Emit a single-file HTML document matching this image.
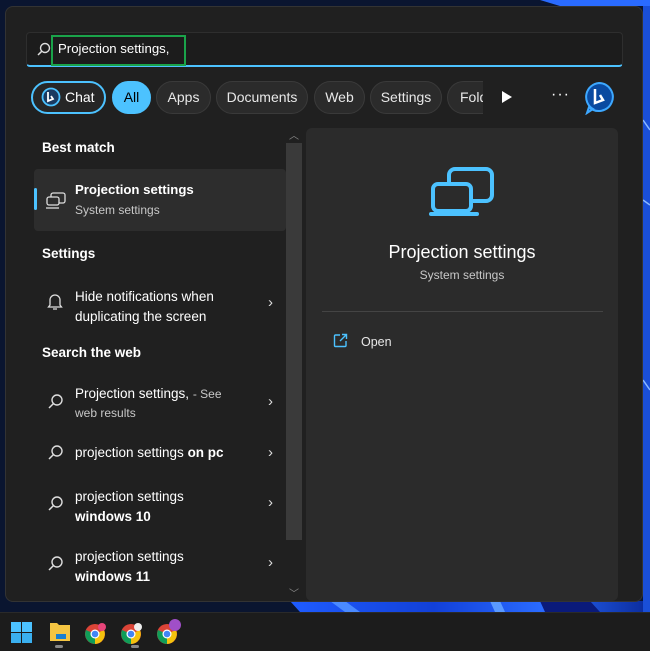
<!DOCTYPE html>
<html><head><meta charset="utf-8"><style>
*{margin:0;padding:0;box-sizing:border-box}
body{width:650px;height:651px;overflow:hidden;background:#0a1530;font-family:"Liberation Sans",sans-serif;color:#fff;position:relative}
.a{position:absolute}
.panel{left:5px;top:6px;width:638px;height:596px;background:#202020;border:1px solid #333;border-radius:8px}
.pill{position:absolute;top:81px;height:33px;border-radius:17px;background:#2b2b2b;border:1px solid #3a3a3a;font-size:14px;line-height:31px;text-align:center;color:#e8e8e8}
.t{position:absolute;font-size:13.5px;color:#fff}
.b{font-weight:bold}
.chev{position:absolute;left:268px;font-size:15px;color:#ddd}
.h{position:absolute;left:42px;font-size:13.5px;font-weight:bold;color:#fff}
.sub{color:#c8c8c8;font-size:12px}
</style></head><body>
<svg class="a" style="left:0;top:0" width="650" height="651">
<defs><linearGradient id="g" x1="0" x2="1"><stop offset="0" stop-color="#1f5cff"/><stop offset=".4" stop-color="#1240d8"/><stop offset=".7" stop-color="#2a6bff"/><stop offset="1" stop-color="#0a2a9a"/></linearGradient></defs>
<path d="M290 601 L650 601 L650 612 L300 612Z" fill="url(#g)"/>
<path d="M330 601 L345 612 L360 612 L345 601Z" fill="#4a8aff"/>
<path d="M490 601 L495 612 L505 612 L500 601Z" fill="#5a9aff"/>
<path d="M540 601 L545 612 L600 612 L590 601Z" fill="#0a1a7a"/>
<rect x="643" y="0" width="7" height="612" fill="#1a4fd8"/>
<path d="M540 0 L650 0 L650 6 L560 6Z" fill="#2a6bff"/>
<path d="M643 120 L650 130 M643 200 L650 205 M643 380 L650 390" stroke="#8ab8ff" stroke-width="1.5"/>
</svg>
<div class="a panel"></div>
<div class="a" style="left:26px;top:32px;width:597px;height:35px;background:#1c1c1c;border:1px solid #2e2e2e;border-radius:4px;border-bottom:2px solid #4cc2ff"></div>
<svg class="a" style="left:37px;top:42px" width="14" height="14"><circle cx="8" cy="6" r="4.5" stroke="#ddd" stroke-width="1.4" fill="none"/><path d="M4.7 9.3 L1 13" stroke="#ddd" stroke-width="1.5"/></svg>
<div class="a" style="left:51px;top:35px;width:135px;height:31px;border:2px solid #1aa34a"></div>
<div class="t" style="left:58px;top:41px;font-size:13.2px">Projection settings,</div>
<div class="pill" style="left:31px;width:75px;border:2px solid #4cc2ff;background:#262626"></div>
<svg class="a" style="left:40px;top:87px" width="22" height="22"><circle cx="11" cy="10" r="8.5" stroke="#4cc2ff" stroke-width="1.8" fill="#1a3a60"/><path d="M8 5 V14 L13 12 L11 9" stroke="#fff" stroke-width="1.8" fill="none"/></svg>
<div class="t" style="left:65px;top:89px;font-size:14px">Chat</div>
<div class="pill" style="left:112px;width:39px;background:#4cc2ff;border-color:#4cc2ff;color:#000">All</div>
<div class="pill" style="left:156px;width:55px">Apps</div>
<div class="pill" style="left:216px;width:92px">Documents</div>
<div class="pill" style="left:314px;width:51px">Web</div>
<div class="pill" style="left:370px;width:72px">Settings</div>
<div class="pill" style="left:447px;width:50px;text-align:left;padding-left:12px;overflow:hidden;border-right:none;border-radius:17px 0 0 17px">Folders</div>
<div class="a" style="left:483px;top:80px;width:40px;height:36px;background:#202020"></div>
<svg class="a" style="left:501px;top:90px" width="12" height="14"><path d="M1 1 L11 7 L1 13Z" fill="#fff"/></svg>
<div class="t" style="left:551px;top:86px;font-size:16px;letter-spacing:1px">···</div>
<svg class="a" style="left:583px;top:81px" width="32" height="34"><path d="M16 2 A14 14 0 1 1 6 26 L4 32 L10 28 A14 14 0 0 1 16 2Z" fill="#0a4aa0" stroke="#3da8ff" stroke-width="2"/><path d="M12 8 V22 L20 19 L17 14" stroke="#fff" stroke-width="2.5" fill="none"/></svg>

<div class="a" style="left:286px;top:143px;width:16px;height:397px;background:#3a3a3a"></div>
<div class="t" style="left:289px;top:127px;font-size:10px;color:#888">︿</div>
<div class="t" style="left:289px;top:585px;font-size:10px;color:#888">﹀</div>

<div class="h" style="top:140px">Best match</div>
<div class="a" style="left:34px;top:169px;width:252px;height:62px;background:#2d2d2d;border-radius:4px"></div>
<div class="a" style="left:34px;top:188px;width:3px;height:22px;background:#4cc2ff;border-radius:2px"></div>
<svg class="a" style="left:45px;top:192px" width="22" height="18"><rect x="6" y="1" width="14" height="10" rx="2" stroke="#ddd" stroke-width="1.3" fill="#2d2d2d"/><rect x="2" y="5" width="12" height="8" rx="2" stroke="#ddd" stroke-width="1.3" fill="#2d2d2d"/><path d="M1 16 H14" stroke="#ddd" stroke-width="1.3"/></svg>
<div class="t b" style="left:75px;top:182px;font-size:13.2px">Projection settings</div>
<div class="t sub" style="left:75px;top:203px">System settings</div>
<div class="h" style="top:246px">Settings</div>
<svg class="a" style="left:46px;top:292px" width="18" height="20"><path d="M4 13 V8 A5 5 0 0 1 14 8 V13 L15.5 15 H2.5Z M7 17 H11" stroke="#ddd" stroke-width="1.3" fill="none"/></svg>
<div class="t" style="left:75px;top:287px;line-height:19.5px">Hide notifications when<br>duplicating the screen</div>
<div class="chev" style="top:294px">›</div>
<div class="h" style="top:345px">Search the web</div>
<svg class="a" style="left:47px;top:393px" width="18" height="18"><circle cx="10" cy="7" r="5" stroke="#ddd" stroke-width="1.4" fill="none"/><path d="M6.5 10.5 L2 15" stroke="#ddd" stroke-width="1.5"/></svg>
<div class="t" style="left:75px;top:386px">Projection settings, <span class="sub">- See</span><br><span class="sub" style="line-height:24px">web results</span></div>
<div class="chev" style="top:393px">›</div>
<svg class="a" style="left:47px;top:444px" width="18" height="18"><circle cx="10" cy="7" r="5" stroke="#ddd" stroke-width="1.4" fill="none"/><path d="M6.5 10.5 L2 15" stroke="#ddd" stroke-width="1.5"/></svg>
<div class="t" style="left:75px;top:445px">projection settings <b>on pc</b></div>
<div class="chev" style="top:444px">›</div>
<svg class="a" style="left:47px;top:495px" width="18" height="18"><circle cx="10" cy="7" r="5" stroke="#ddd" stroke-width="1.4" fill="none"/><path d="M6.5 10.5 L2 15" stroke="#ddd" stroke-width="1.5"/></svg>
<div class="t" style="left:75px;top:487px;line-height:20px">projection settings<br><b>windows 10</b></div>
<div class="chev" style="top:494px">›</div>
<svg class="a" style="left:47px;top:555px" width="18" height="18"><circle cx="10" cy="7" r="5" stroke="#ddd" stroke-width="1.4" fill="none"/><path d="M6.5 10.5 L2 15" stroke="#ddd" stroke-width="1.5"/></svg>
<div class="t" style="left:75px;top:547px;line-height:20px">projection settings<br><b>windows 11</b></div>
<div class="chev" style="top:554px">›</div>

<div class="a" style="left:306px;top:128px;width:312px;height:473px;background:#2b2b2b;border-radius:6px"></div>
<svg class="a" style="left:428px;top:165px" width="70" height="52"><rect x="21" y="4" width="43" height="32" rx="6" stroke="#4cc2ff" stroke-width="4" fill="#2b2b2b"/><rect x="5" y="19" width="38" height="27" rx="5" stroke="#4cc2ff" stroke-width="4" fill="#2b2b2b"/><path d="M3 49 H49" stroke="#4cc2ff" stroke-width="4" stroke-linecap="round"/></svg>
<div class="t" style="left:306px;width:312px;text-align:center;top:242px;font-size:18px">Projection settings</div>
<div class="t sub" style="left:306px;width:312px;text-align:center;top:268px">System settings</div>
<div class="a" style="left:322px;top:311px;width:281px;height:1px;background:#444"></div>
<svg class="a" style="left:333px;top:333px" width="15" height="15"><path d="M7 2 H2.5 A1 1 0 0 0 1.5 3 V12.5 A1 1 0 0 0 2.5 13.5 H12 A1 1 0 0 0 13 12.5 V8 M7 8 L13.5 1.5 M9 1.5 H13.5 V6" stroke="#4cc2ff" stroke-width="1.4" fill="none"/></svg>
<div class="t" style="left:361px;top:335px;font-size:12.5px;color:#e8e8e8">Open</div>

<div class="a" style="left:0;top:612px;width:650px;height:39px;background:#1c1c1c;border-top:1px solid #2a2a2a"></div>
<svg class="a" style="left:11px;top:622px" width="22" height="22"><rect x="0" y="0" width="10" height="10" fill="#4cc2ff"/><rect x="11" y="0" width="10" height="10" fill="#4cc2ff"/><rect x="0" y="11" width="10" height="10" fill="#3ab0f0"/><rect x="11" y="11" width="10" height="10" fill="#3ab0f0"/></svg>
<svg class="a" style="left:48px;top:621px" width="24" height="22"><path d="M2 2 H9 L11 4 H22 V20 H2Z" fill="#f5c542"/><rect x="8" y="13" width="10" height="5" fill="#1a7fd0"/></svg>
<div class="a" style="left:55px;top:645px;width:8px;height:3px;background:#888;border-radius:2px"></div>
<svg class="a" style="left:84px;top:621px" width="26" height="24"><circle cx="11" cy="13" r="10" fill="#db4437"/><path d="M11 13 L20 9 A10 10 0 0 1 11 23Z" fill="#f4c20d"/><path d="M11 13 L11 23 A10 10 0 0 1 2 9Z" fill="#0f9d58"/><circle cx="11" cy="13" r="4.5" fill="#fff"/><circle cx="11" cy="13" r="3.3" fill="#4285f4"/><circle cx="18" cy="6" r="4" fill="#e8457a"/></svg>
<svg class="a" style="left:120px;top:621px" width="26" height="24"><circle cx="11" cy="13" r="10" fill="#db4437"/><path d="M11 13 L20 9 A10 10 0 0 1 11 23Z" fill="#f4c20d"/><path d="M11 13 L11 23 A10 10 0 0 1 2 9Z" fill="#0f9d58"/><circle cx="11" cy="13" r="4.5" fill="#fff"/><circle cx="11" cy="13" r="3.3" fill="#4285f4"/><circle cx="18" cy="6" r="4" fill="#eee"/></svg>
<svg class="a" style="left:156px;top:617px" width="28" height="28"><circle cx="11" cy="17" r="10" fill="#db4437"/><path d="M11 17 L20 13 A10 10 0 0 1 11 27Z" fill="#f4c20d"/><path d="M11 17 L11 27 A10 10 0 0 1 2 13Z" fill="#0f9d58"/><circle cx="11" cy="17" r="4.5" fill="#fff"/><circle cx="11" cy="17" r="3.3" fill="#4285f4"/><circle cx="19" cy="8" r="6" fill="#a04fc8"/></svg>
<div class="a" style="left:131px;top:645px;width:8px;height:3px;background:#888;border-radius:2px"></div>
</body></html>
